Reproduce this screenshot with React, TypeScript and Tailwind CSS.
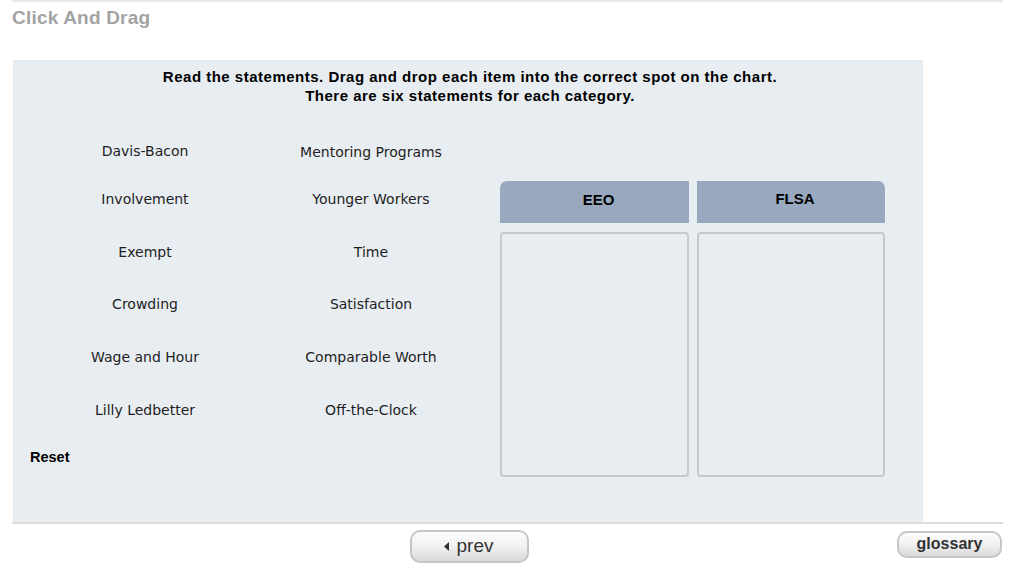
import React from "react";

const col1 = ["Davis-Bacon", "Involvement", "Exempt", "Crowding", "Wage and Hour", "Lilly Ledbetter"];
const col2 = ["Mentoring Programs", "Younger Workers", "Time", "Satisfaction", "Comparable Worth", "Off-the-Clock"];
const tops = ["mt-[36px]", "mt-[28px]", "mt-[33px]", "mt-[32px]", "mt-[33px]", "mt-[33px]"];

export default function App() {
  return (
    <div className="w-[1024px] h-[577px] bg-white overflow-hidden" style={{ fontFamily: '"Liberation Sans", Arial, sans-serif' }}>
      <div className="ml-[12px] w-[991px] h-[3px] bg-gradient-to-b from-[#dedede] to-white" />
      <div className="ml-[12px] mt-[2px] h-[26px] leading-[26px] text-[19px] tracking-[0.2px] font-bold text-[#a3a3a3]">Click And Drag</div>
      <div className="ml-[13px] mt-[29px] w-[910px] h-[462px] bg-[#e8edf2] pt-[7px]">
        <div className="text-center text-[15px] tracking-[0.5px] leading-[19px] font-bold text-black pl-[4px]">
          <div>Read the statements. Drag and drop each item into the correct spot on the chart.</div>
          <div>There are six statements for each category.</div>
        </div>
        <div className="flex items-start">
          <div className="w-[471px] flex flex-col">
            <div className="ml-[19px] grid grid-cols-[226px_226px]">
              <div className="flex flex-col">
                {col1.map((t, i) => (
                  <div key={t} className={`${tops[i]} h-[20px] leading-[20px] text-center text-[14px] text-[#1e1e1e]`} style={{ fontFamily: '"DejaVu Sans", Verdana, sans-serif' }}>
                    {t}
                  </div>
                ))}
              </div>
              <div className="flex flex-col">
                {col2.map((t, i) => (
                  <div key={t} className={`${tops[i]} h-[20px] leading-[20px] text-center text-[14px] text-[#1e1e1e] ${i === 0 ? "translate-y-[1px]" : ""}`} style={{ fontFamily: '"DejaVu Sans", Verdana, sans-serif' }}>
                    {t}
                  </div>
                ))}
              </div>
            </div>
            <div className="ml-[17px] mt-[27px] h-[20px] leading-[20px] text-[14.5px] font-bold text-black">Reset</div>
          </div>
          <div className="ml-[16px] mt-[76px] flex gap-[8px]">
            <div className="flex flex-col w-[189px]">
              <div className="h-[42px] rounded-tl-[7px] bg-[#98a9bf] flex items-center justify-center text-[15px] font-bold text-black pl-[8px] pb-[4px]">EEO</div>
              <div className="mt-[9px] h-[245px] rounded-[4px] border-2 border-[#c5c9cd]" />
            </div>
            <div className="flex flex-col w-[188px]">
              <div className="h-[42px] rounded-tr-[7px] bg-[#98a9bf] flex items-center justify-center text-[15px] font-bold text-black pl-[8px] pb-[6px]">FLSA</div>
              <div className="mt-[9px] h-[245px] rounded-[4px] border-2 border-[#c5c9cd]" />
            </div>
          </div>
        </div>
      </div>
      <div className="ml-[12px] w-[991px] h-[2px] bg-[#dcdcdc]" />
      <div className="flex items-start pl-[410px] pr-[22px]">
        <div className="mt-[6px] w-[119px] h-[33px] rounded-[10px] border-2 border-[#c6c6c6] bg-gradient-to-b from-[#fdfdfd] via-[#f1f1f1] to-[#d9d9d9] flex items-center justify-center text-[19px] text-[#333] gap-[8px]" style={{ fontFamily: '"Liberation Sans", Helvetica, Arial, sans-serif' }}>
          <svg width="5" height="9" viewBox="0 0 5 9" className="ml-[-2px]"><path d="M5 0 L0 4.5 L5 9 Z" fill="#333" /></svg>
          <span className="leading-none pb-[2px]">prev</span>
        </div>
        <div className="ml-auto mt-[7px] w-[105px] h-[27px] rounded-[10px] border-2 border-[#c6c6c6] bg-gradient-to-b from-[#fdfdfd] via-[#f1f1f1] to-[#d9d9d9] flex items-center justify-center text-[16px] font-bold text-[#333]">
          <span className="leading-none pb-[1px]">glossary</span>
        </div>
      </div>
    </div>
  );
}
